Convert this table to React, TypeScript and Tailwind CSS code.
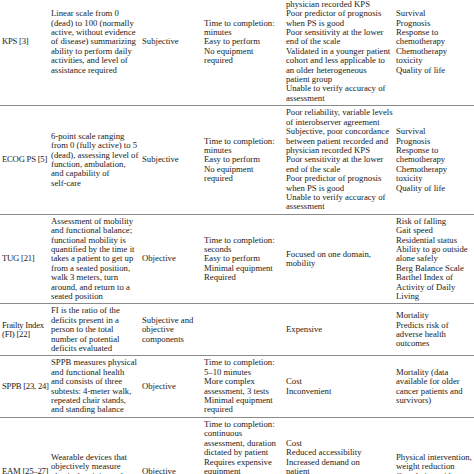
import React from "react";

type Row = {
  tool: string[];
  desc: string[];
  kind: string[];
  pros: string[];
  cons: string[];
  outcomes: string[];
};

const rows: Row[] = [
  {
    tool: ["KPS [3]"],
    desc: [
      "Linear scale from 0",
      "(dead) to 100 (normally",
      "active, without evidence",
      "of disease) summarizing",
      "ability to perform daily",
      "activities, and level of",
      "assistance required",
    ],
    kind: ["Subjective"],
    pros: ["Time to completion:", "minutes", "Easy to perform", "No equipment", "required"],
    cons: [
      "Subjective, poor concordance",
      "between patient recorded and",
      "physician recorded KPS",
      "Poor predictor of prognosis",
      "when PS is good",
      "Poor sensitivity at the lower",
      "end of the scale",
      "Validated in a younger patient",
      "cohort and less applicable to",
      "an older heterogeneous",
      "patient group",
      "Unable to verify accuracy of",
      "assessment",
    ],
    outcomes: ["Survival", "Prognosis", "Response to", "chemotherapy", "Chemotherapy", "toxicity", "Quality of life"],
  },
  {
    tool: ["ECOG PS [5]"],
    desc: [
      "6-point scale ranging",
      "from 0 (fully active) to 5",
      "(dead), assessing level of",
      "function, ambulation,",
      "and capability of",
      "self-care",
    ],
    kind: ["Subjective"],
    pros: ["Time to completion:", "minutes", "Easy to perform", "No equipment", "required"],
    cons: [
      "Poor reliability, variable levels",
      "of interobserver agreement",
      "Subjective, poor concordance",
      "between patient recorded and",
      "physician recorded KPS",
      "Poor sensitivity at the lower",
      "end of the scale",
      "Poor predictor of prognosis",
      "when PS is good",
      "Unable to verify accuracy of",
      "assessment",
    ],
    outcomes: ["Survival", "Prognosis", "Response to", "chemotherapy", "Chemotherapy", "toxicity", "Quality of life"],
  },
  {
    tool: ["TUG [21]"],
    desc: [
      "Assessment of mobility",
      "and functional balance;",
      "functional mobility is",
      "quantified by the time it",
      "takes a patient to get up",
      "from a seated position,",
      "walk 3 meters, turn",
      "around, and return to a",
      "seated position",
    ],
    kind: ["Objective"],
    pros: ["Time to completion:", "seconds", "Easy to perform", "Minimal equipment", "Required"],
    cons: ["Focused on one domain,", "mobility"],
    outcomes: [
      "Risk of falling",
      "Gait speed",
      "Residential status",
      "Ability to go outside",
      "alone safely",
      "Berg Balance Scale",
      "Barthel Index of",
      "Activity of Daily",
      "Living",
    ],
  },
  {
    tool: ["Frailty Index", "(FI) [22]"],
    desc: [
      "FI is the ratio of the",
      "deficits present in a",
      "person to the total",
      "number of potential",
      "deficits evaluated",
    ],
    kind: ["Subjective and", "objective", "components"],
    pros: [],
    cons: ["Expensive"],
    outcomes: ["Mortality", "Predicts risk of", "adverse health", "outcomes"],
  },
  {
    tool: ["SPPB [23, 24]"],
    desc: [
      "SPPB measures physical",
      "and functional health",
      "and consists of three",
      "subtests: 4-meter walk,",
      "repeated chair stands,",
      "and standing balance",
    ],
    kind: ["Objective"],
    pros: [
      "Time to completion:",
      "5–10 minutes",
      "More complex",
      "assessment, 3 tests",
      "Minimal equipment",
      "required",
    ],
    cons: ["Cost", "Inconvenient"],
    outcomes: ["Mortality (data", "available for older", "cancer patients and", "survivors)"],
  },
  {
    tool: ["EAM [25–27]"],
    desc: [
      "Wearable devices that",
      "objectively measure",
      "physical activity and can",
      "be worn for days",
    ],
    kind: ["Objective"],
    pros: [
      "Time to completion:",
      "continuous",
      "assessment, duration",
      "dictated by patient",
      "Requires expensive",
      "equipment",
      "Data processing",
      "requires expertise",
      "Objective, less",
      "subject to recall",
      "bias",
    ],
    cons: [
      "Cost",
      "Reduced accessibility",
      "Increased demand on",
      "patient",
      "Variable compliance",
      "Lack of standard",
      "thresholds",
    ],
    outcomes: ["Physical intervention,", "weight reduction", "Correlation with", "functional status"],
  },
];

const Cell: React.FC<{ lines: string[]; tight?: boolean }> = ({ lines, tight }) => (
  <div className={`flex flex-col justify-center pl-[2px] py-[2px] ${tight ? "tracking-[-0.25px]" : ""}`}>
    {lines.map((l, i) => (
      <span key={i} className="block whitespace-nowrap">
        {l}
      </span>
    ))}
  </div>
);

export default function App() {
  return (
    <div className="w-[474px] h-[474px] overflow-hidden bg-white text-[#222] font-['Liberation_Serif','Times_New_Roman',serif] text-[8.7px] leading-[9.4px]">
      <div className="-mt-[21px] flex flex-col">
        {rows.map((r, i) => (
          <div
            key={i}
            className="grid grid-cols-[49px_91px_62px_82px_110px_80px] border-b-[1.5px] border-[#8a8a8a]"
          >
            <Cell lines={r.tool} tight />
            <Cell lines={r.desc} />
            <Cell lines={r.kind} />
            <Cell lines={r.pros} />
            <Cell lines={r.cons} />
            <Cell lines={r.outcomes} />
          </div>
        ))}
      </div>
    </div>
  );
}
